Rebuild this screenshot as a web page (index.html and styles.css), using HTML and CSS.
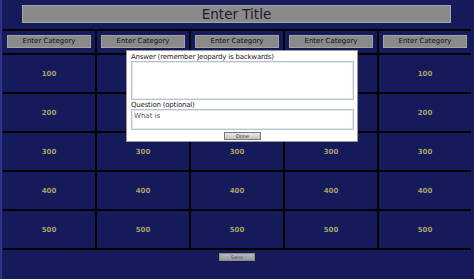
FILE: index.html
```html
<!DOCTYPE html>
<html lang="en">
  <head>
    <meta charset="UTF-8" />
    <meta name="viewport" content="width=device-width, initial-scale=1.0" />
    <title>Jeopardy Editor</title>
    <link rel="stylesheet" href="styles.css">
  </head>
  <body>
    <div class="page">
      <div class="title-row">
        <div class="title-box">Enter Title</div>
      </div>
      <div class="board">
        <div class="cat-cell"><div class="cat-box">Enter Category</div></div>
        <div class="cat-cell"><div class="cat-box">Enter Category</div></div>
        <div class="cat-cell"><div class="cat-box">Enter Category</div></div>
        <div class="cat-cell"><div class="cat-box">Enter Category</div></div>
        <div class="cat-cell"><div class="cat-box">Enter Category</div></div>

        <div class="cell">100</div><div class="cell">100</div><div class="cell">100</div><div class="cell">100</div><div class="cell">100</div>
        <div class="cell">200</div><div class="cell">200</div><div class="cell">200</div><div class="cell">200</div><div class="cell">200</div>
        <div class="cell">300</div><div class="cell">300</div><div class="cell">300</div><div class="cell">300</div><div class="cell">300</div>
        <div class="cell">400</div><div class="cell">400</div><div class="cell">400</div><div class="cell">400</div><div class="cell">400</div>
        <div class="cell">500</div><div class="cell">500</div><div class="cell">500</div><div class="cell">500</div><div class="cell">500</div>
      </div>
      <div class="save-row">
        <div class="btn save-btn">Save</div>
      </div>
    </div>

    <div class="dialog">
      <div class="label">Answer (remember Jeopardy is backwards)</div>
      <div class="field answer-field"></div>
      <div class="label">Question (optional)</div>
      <div class="field question-field">What is</div>
      <div class="dialog-buttons">
        <div class="btn done-btn">Done</div>
      </div>
    </div>
  </body>
</html>
```

FILE: styles.css
```css
body {
  margin: 0;
  width: 474px;
  height: 279px;
  overflow: hidden;
  background-color: #151a5b;
  font-family: "DejaVu Sans", Verdana, sans-serif;
  position: relative;
}

.page {
  height: 279px;
  border-left: 2px solid #2c3388;
  padding-left: 1px;
  box-sizing: border-box;
}

.title-row {
  height: 29px;
  padding: 5px 0 0 19px;
  box-sizing: border-box;
}

.title-box {
  width: 429px;
  height: 18px;
  box-sizing: border-box;
  background: #8a8a8a;
  border: 1px solid #a6a6a6;
  color: #1c1c2c;
  font-size: 13.5px;
  line-height: 16px;
  text-align: center;
}

.board {
  width: 468px;
  display: grid;
  grid-template-columns: repeat(5, 92px);
  grid-template-rows: 22px repeat(5, 37px);
  gap: 2px;
  background: #000;
  border-top: 2px solid #000;
  border-bottom: 2px solid #000;
}

.cat-cell {
  background: #151a5b;
  padding: 4px 4px 0 4px;
}

.cat-box {
  height: 13px;
  box-sizing: border-box;
  background: #8a8a8a;
  border: 1px solid #a3a3a3;
  color: #101010;
  font-size: 7px;
  line-height: 11px;
  text-align: center;
}

.cell {
  background: #151a5b;
  color: #a8a066;
  font-size: 7px;
  font-weight: bold;
  display: flex;
  align-items: center;
  justify-content: center;
}

.save-row {
  display: flex;
  justify-content: center;
  padding-top: 3px;
  padding-right: 3px;
}

.btn {
  height: 8px;
  box-sizing: border-box;
  border: 1px solid #7a7a7a;
  background: linear-gradient(#e8e8e8, #c4c4c4);
  color: #333;
  font-size: 5px;
  line-height: 6px;
  text-align: center;
}

.save-btn {
  width: 36px;
  background: linear-gradient(#b8b8b8, #9a9a9a);
  border-color: #8a8a8a;
  color: #555;
}

.dialog {
  position: absolute;
  left: 126px;
  top: 50px;
  width: 232px;
  height: 92px;
  box-sizing: border-box;
  background: #fff;
  border: 1px solid #9a9a9a;
  padding: 2px 3px 0 4px;
}

.label {
  font-size: 7px;
  line-height: 8px;
  letter-spacing: -0.2px;
  color: #222;
}

.field {
  box-sizing: border-box;
  border: 1px solid #b7bfd0;
  box-shadow: inset 0 0 0 1px #e6e9f0;
  font-size: 7px;
  line-height: 8px;
  color: #555;
  padding: 2px 2px;
}

.answer-field {
  height: 39px;
  margin-bottom: 1px;
}

.question-field {
  height: 21px;
}

.dialog-buttons {
  display: flex;
  justify-content: center;
  padding-top: 2px;
}

.done-btn {
  width: 37px;
}
```
